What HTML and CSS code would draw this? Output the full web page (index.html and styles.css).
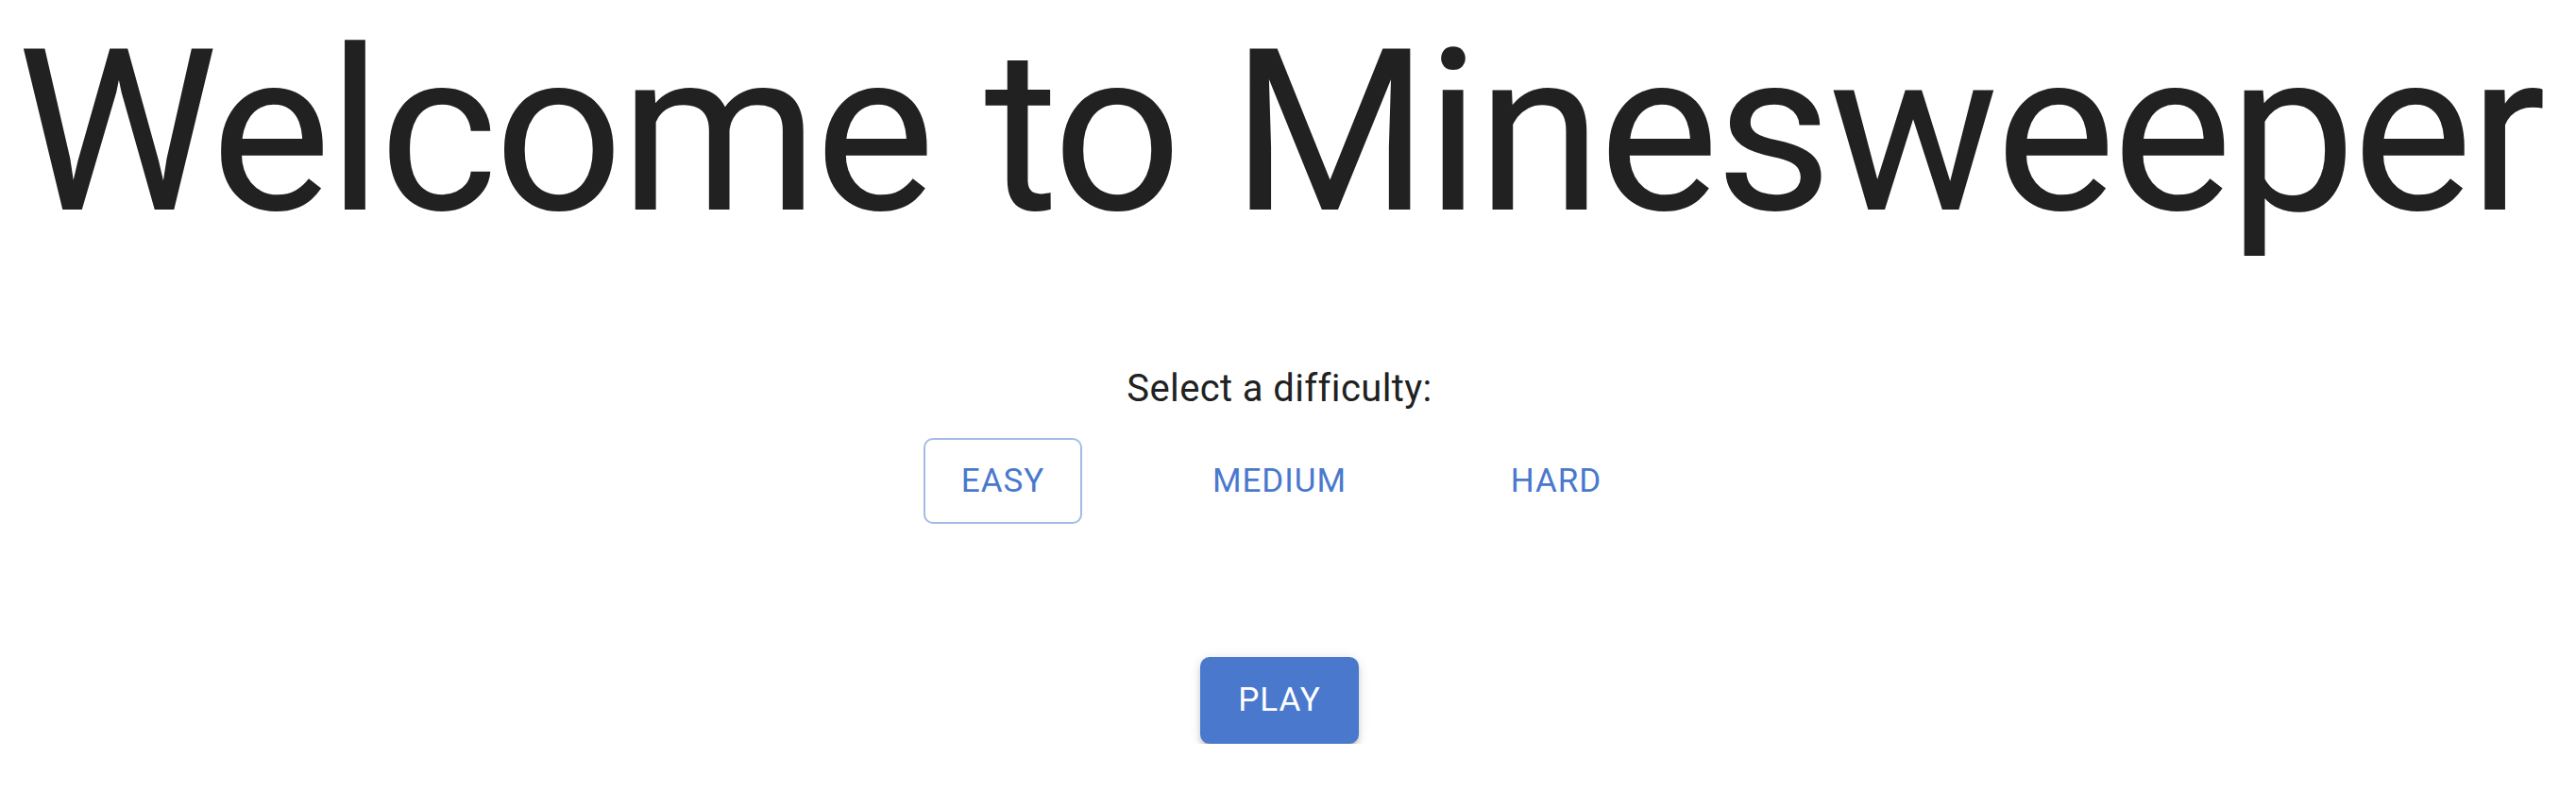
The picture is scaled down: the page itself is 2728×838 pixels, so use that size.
FILE: index.html
```html
<!DOCTYPE html>
<html lang="en">
<head>
<meta charset="utf-8">
<title>Minesweeper</title>
<link rel="stylesheet" href="styles.css">
</head>
<body>
<main class="page">
  <h1 class="title">Welcome to Minesweeper</h1>
  <p class="prompt">Select a difficulty:</p>
  <div class="levels">
    <div class="level"><button class="btn btn-outlined">Easy</button></div>
    <div class="level"><button class="btn btn-text">Medium</button></div>
    <div class="level"><button class="btn btn-text">Hard</button></div>
  </div>
  <div class="play-row">
    <button class="btn btn-contained">Play</button>
  </div>
</main>
</body>
</html>
```
FILE: styles.css
```css
html, body {
  margin: 0;
  padding: 0;
  background: #ffffff;
}
body {
  font-family: Roboto, "Liberation Sans", sans-serif;
  color: #212121;
}
.page {
  display: flex;
  flex-direction: column;
  align-items: center;
  padding-right: 18px;
}
.title {
  margin: 0;
  font-size: 240px;
  font-weight: 400;
  line-height: 1.167;
  letter-spacing: -3.75px;
  white-space: nowrap;
}
.prompt {
  margin: 102px 0 0;
  font-size: 40px;
  line-height: 1.5;
  letter-spacing: 0.375px;
}
.levels {
  display: flex;
  margin-top: 22px;
}
.level {
  width: 293px;
  display: flex;
  justify-content: center;
}
.btn {
  font-family: Roboto, "Liberation Sans", sans-serif;
  font-weight: 400;
  font-size: 35px;
  line-height: 1.75;
  letter-spacing: 1px;
  text-transform: uppercase;
  border-radius: 10px;
  background: transparent;
  color: #4a78cd;
  border: 0;
  cursor: pointer;
  min-width: 160px;
}
.btn-outlined {
  padding: 12px 37.5px;
  border: 2.5px solid rgba(74, 120, 205, 0.5);
}
.btn-text {
  padding: 15px 20px;
}
.play-row {
  margin-top: 141px;
}
.btn-contained {
  padding: 15px 40px;
  background: #4a78cd;
  color: #ffffff;
  box-shadow: 0 7.5px 2.5px -5px rgba(0,0,0,0.2), 0 5px 5px 0 rgba(0,0,0,0.14), 0 2.5px 12.5px 0 rgba(0,0,0,0.12);
}
```
